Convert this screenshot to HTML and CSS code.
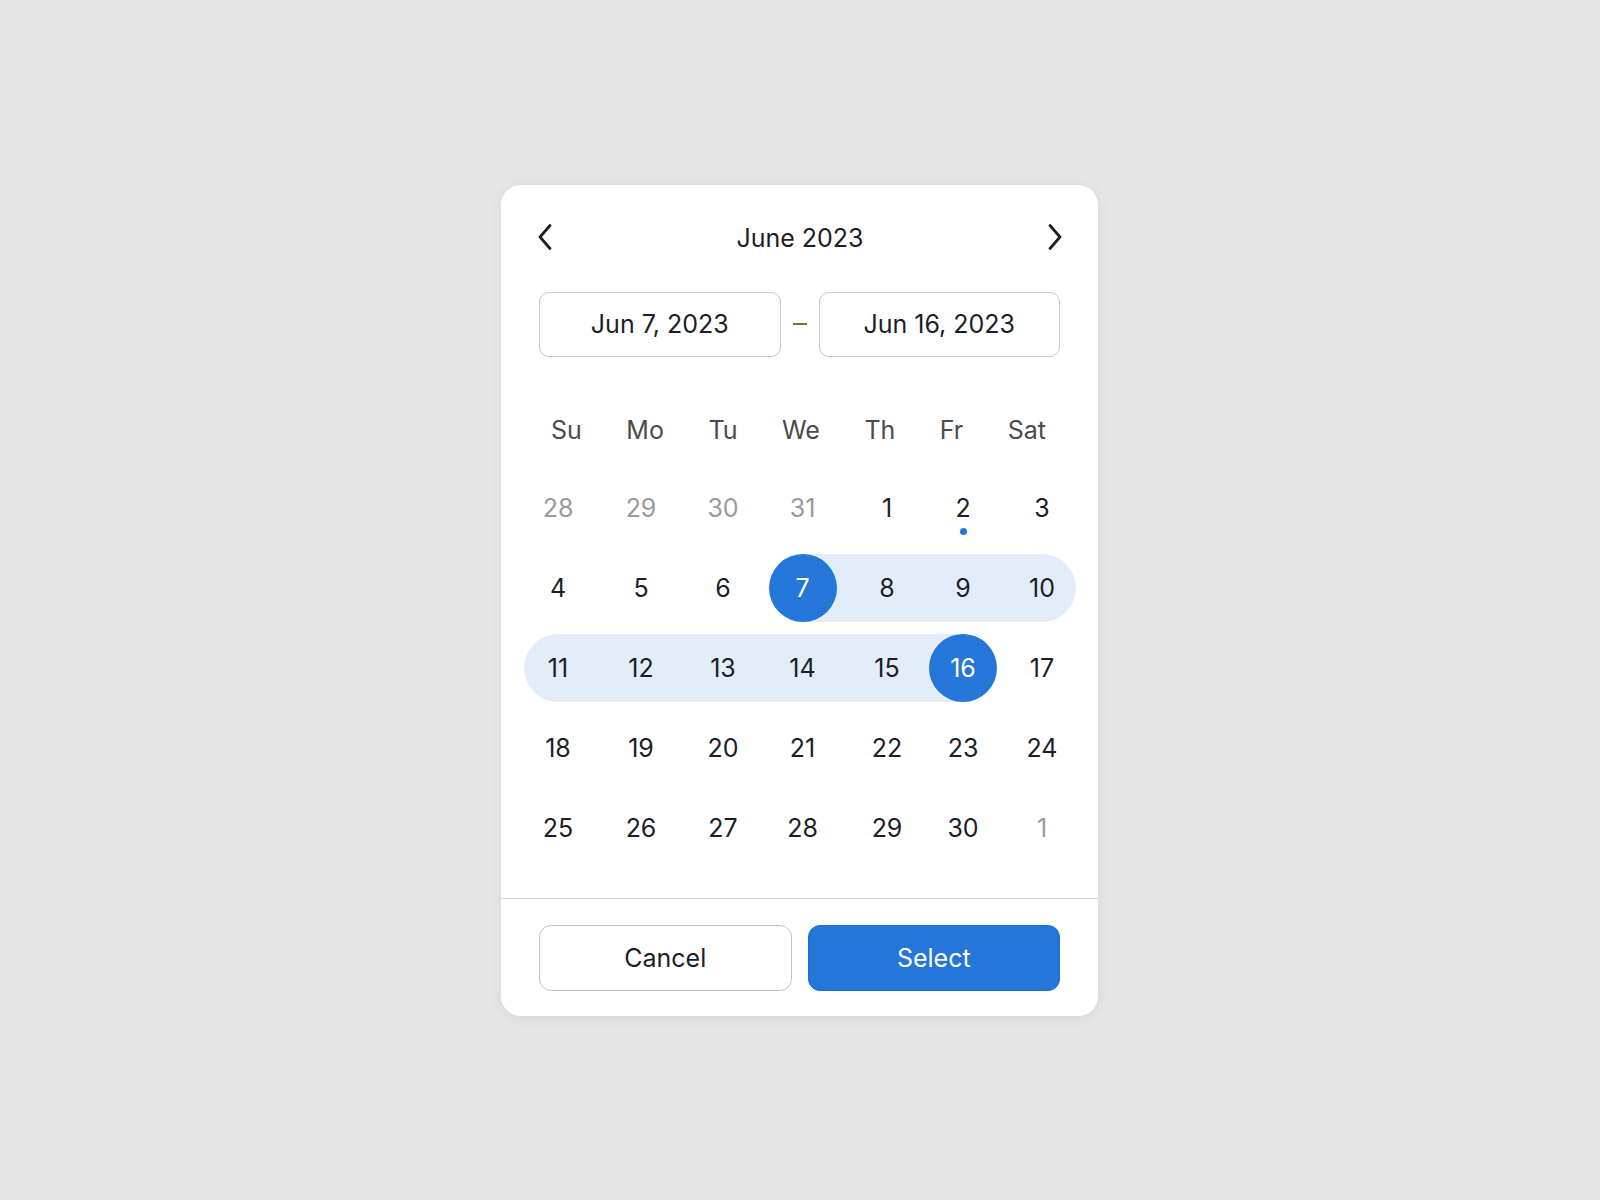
FILE: index.html
```html
<!DOCTYPE html>
<html lang="en">
<head>
    <meta charset="UTF-8">
    <meta name="viewport" content="width=device-width, initial-scale=1.0">
    <title>Date Range Picker</title>
    <link rel="stylesheet" href="styles.css">
</head>
<body>

    <div class="picker">
        <div class="picker-header">
            <button class="nav-btn" type="button" aria-label="Previous month">
                <svg width="14" height="26" viewBox="0 0 14 26"><path d="M12 1.5 2 13l10 11.5"/></svg>
            </button>
            <h2 class="month-title">June 2023</h2>
            <button class="nav-btn" type="button" aria-label="Next month">
                <svg width="14" height="26" viewBox="0 0 14 26"><path d="M2 1.5 12 13 2 24.5"/></svg>
            </button>
        </div>

        <div class="range-fields">
            <input class="range-input" type="text" value="Jun 7, 2023" readonly>
            <span class="range-dash"></span>
            <input class="range-input" type="text" value="Jun 16, 2023" readonly>
        </div>

        <div class="weekdays">
            <span>Su</span>
            <span>Mo</span>
            <span>Tu</span>
            <span>We</span>
            <span>Th</span>
            <span>Fr</span>
            <span>Sat</span>
        </div>

        <div class="days">
            <div class="day muted"><span class="num">28</span></div>
            <div class="day muted"><span class="num">29</span></div>
            <div class="day muted"><span class="num">30</span></div>
            <div class="day muted"><span class="num">31</span></div>
            <div class="day"><span class="num">1</span></div>
            <div class="day has-event"><span class="num">2</span></div>
            <div class="day"><span class="num">3</span></div>

            <div class="day"><span class="num">4</span></div>
            <div class="day"><span class="num">5</span></div>
            <div class="day"><span class="num">6</span></div>
            <div class="day range-start"><span class="num selected">7</span></div>
            <div class="day in-range"><span class="num">8</span></div>
            <div class="day in-range"><span class="num">9</span></div>
            <div class="day in-range row-end"><span class="num">10</span></div>

            <div class="day in-range row-start"><span class="num">11</span></div>
            <div class="day in-range"><span class="num">12</span></div>
            <div class="day in-range"><span class="num">13</span></div>
            <div class="day in-range"><span class="num">14</span></div>
            <div class="day in-range"><span class="num">15</span></div>
            <div class="day range-end"><span class="num selected">16</span></div>
            <div class="day"><span class="num">17</span></div>

            <div class="day"><span class="num">18</span></div>
            <div class="day"><span class="num">19</span></div>
            <div class="day"><span class="num">20</span></div>
            <div class="day"><span class="num">21</span></div>
            <div class="day"><span class="num">22</span></div>
            <div class="day"><span class="num">23</span></div>
            <div class="day"><span class="num">24</span></div>

            <div class="day"><span class="num">25</span></div>
            <div class="day"><span class="num">26</span></div>
            <div class="day"><span class="num">27</span></div>
            <div class="day"><span class="num">28</span></div>
            <div class="day"><span class="num">29</span></div>
            <div class="day"><span class="num">30</span></div>
            <div class="day muted"><span class="num">1</span></div>
        </div>

        <div class="picker-footer">
            <button class="btn btn-cancel" type="button">Cancel</button>
            <button class="btn btn-select" type="button">Select</button>
        </div>
    </div>

</body>
</html>
```

FILE: styles.css
```css
body {
    margin: 0;
    min-height: 100vh;
    display: flex;
    align-items: center;
    justify-content: center;
    background: #e6e6e6;
    font-family: Inter, "Noto Sans", sans-serif;
    color: #1b1e29;
}

.picker {
    width: 597px;
    margin-right: 1px;
    background: #fff;
    border-radius: 20px;
    box-shadow: 0 2px 14px rgba(0, 0, 0, 0.07);
}

/* month header */
.picker-header {
    display: flex;
    align-items: center;
    justify-content: space-between;
    height: 32px;
    padding: 36px 36px 2px 37px;
}

.nav-btn {
    display: flex;
    padding: 0;
    border: none;
    background: none;
    cursor: pointer;
}

.nav-btn path {
    fill: none;
    stroke: #1b1e29;
    stroke-width: 2.7;
    stroke-linecap: round;
    stroke-linejoin: round;
}

.month-title {
    margin: 2px 0 0;
    font-size: 25px;
    font-weight: 400;
}

/* from / to fields */
.range-fields {
    display: flex;
    align-items: center;
    gap: 12px;
    padding: 37px 38px 0 38px;
}

.range-input {
    flex: 1;
    min-width: 0;
    height: 65px;
    box-sizing: border-box;
    border: 1px solid #c6c6c6;
    border-radius: 10px;
    font: inherit;
    font-size: 25px;
    color: #1b1e29;
    text-align: center;
    outline: none;
}

.range-dash {
    width: 14px;
    height: 2px;
    background: #6f7b2c;
}

/* calendar grid */
.weekdays {
    display: flex;
    justify-content: space-between;
    margin: 58px 52px 0 50px;
    font-size: 25px;
    line-height: 30px;
    color: #4b4b4b;
}

.days {
    display: grid;
    grid-template-columns: 72px 90px 74px 85px 84px 68px 79px;
    grid-auto-rows: 68px;
    row-gap: 12px;
    margin: 29px 0 0 23px;
}

.day {
    position: relative;
    display: flex;
    align-items: center;
    justify-content: center;
    font-size: 25px;
}

/* first and last columns hug the outer edges of the week */
.day:nth-child(7n + 1) {
    justify-content: flex-start;
}

.day:nth-child(7n) {
    justify-content: flex-end;
}

.num {
    display: flex;
    align-items: center;
    justify-content: center;
    width: 68px;
    height: 68px;
    border-radius: 50%;
}

.day.muted {
    color: #9a9a9a;
}

.day.has-event::after {
    content: "";
    position: absolute;
    left: 50%;
    bottom: 7px;
    width: 7px;
    height: 7px;
    margin-left: -3px;
    border-radius: 50%;
    background: #2476d8;
}

.day.in-range {
    background: #e3edfa;
}

.day.row-start {
    border-radius: 34px 0 0 34px;
}

.day.row-end {
    border-radius: 0 34px 34px 0;
}

.day.range-start {
    background: linear-gradient(to right, transparent 50%, #e3edfa 50%);
}

.day.range-end {
    background: linear-gradient(to right, #e3edfa 50%, transparent 50%);
}

.num.selected {
    background: #2476d8;
    color: #fff;
}

/* actions */
.picker-footer {
    display: flex;
    gap: 16px;
    margin-top: 36px;
    padding: 26px 38px 25px 38px;
    border-top: 1px solid #d4d4d4;
}

.btn {
    flex: 1;
    height: 66px;
    border-radius: 12px;
    font: inherit;
    font-size: 25px;
    cursor: pointer;
}

.btn-cancel {
    background: #fff;
    border: 1px solid #c4c4c4;
    color: #1b1e29;
}

.btn-select {
    background: #2476d8;
    border: 1px solid #1f6fd0;
    color: #fff;
}
```
